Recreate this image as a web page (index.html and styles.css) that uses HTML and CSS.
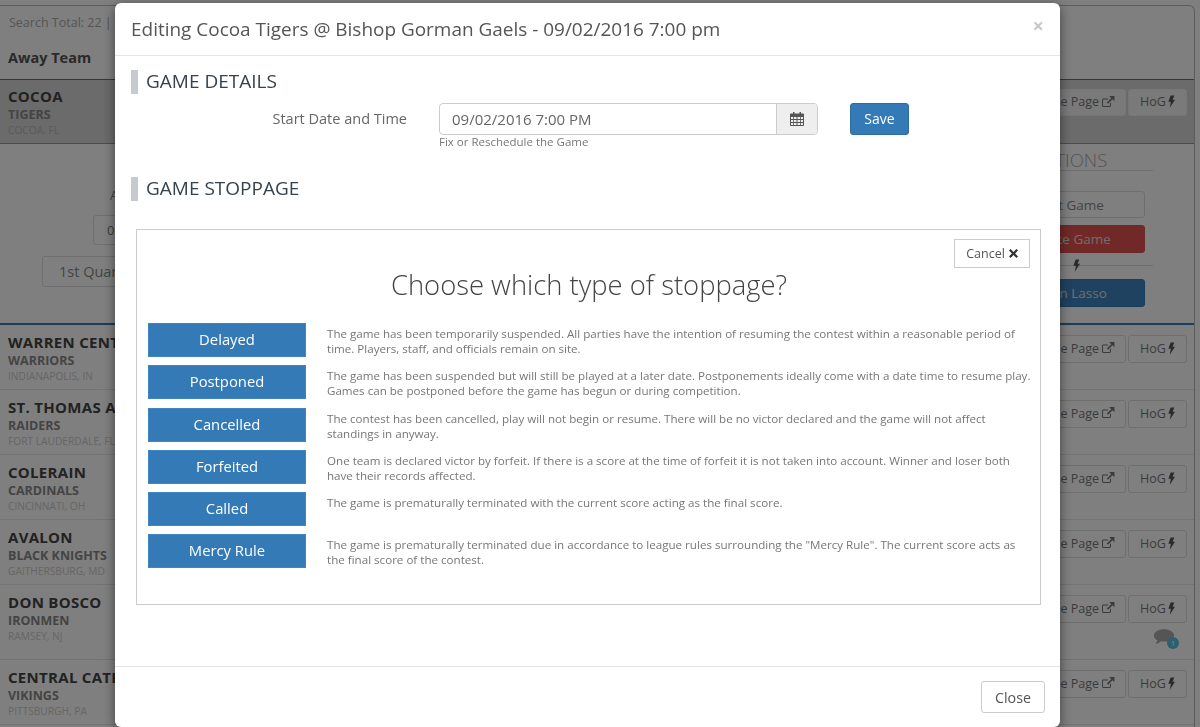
FILE: index.html
```html
<!DOCTYPE html>
<html lang="en">
<head>
<meta charset="utf-8">
<title>Edit game</title>
<link rel="stylesheet" href="styles.css">
</head>
<body>
<svg class="defs" width="0" height="0" aria-hidden="true">
  <symbol id="i-ext" viewBox="0 0 16 14"><path d="M11.5 8v3.2a1.6 1.6 0 0 1-1.6 1.6H2.6A1.6 1.6 0 0 1 1 11.2V4.6A1.6 1.6 0 0 1 2.6 3H8v1.2H2.8a.6.6 0 0 0-.6.6v6.2c0 .3.3.6.6.6h6.9c.3 0 .6-.3.6-.6V8zM9.4 0H15.5v6L13.3 3.9 8 9 6.6 7.6 11.800 2.500z"/></symbol>
  <symbol id="i-bolt" viewBox="0 0 8 14"><path d="M3 0h4.200L5.200 5H8L2 14l1.300-6.800H.4z"/></symbol>
</svg>

<main class="card">
  <div class="search">Search Total: 22 |</div>
  <div class="thead">Away Team</div>

  <section class="row row-active">
    <div class="team"><b>COCOA</b><strong>TIGERS</strong><span>COCOA, FL</span></div>
    <div class="links"><a class="btn page">Game Page <svg class="ext"><use href="#i-ext"/></svg></a><a class="btn hog">HoG <svg class="bolt"><use href="#i-bolt"/></svg></a></div>
  </section>

  <section class="detail">
    <div class="score">
      <div class="score-label">Away</div>
      <div class="score-box">0</div>
      <div class="quarter">1st Quarter</div>
    </div>
    <div class="actions">
      <h3>ACTIONS</h3>
      <a class="act act-plain">Edit Game</a>
      <a class="act act-red">Delete Game</a>
      <div class="act-sep"><svg class="bolt"><use href="#i-bolt"/></svg></div>
      <a class="act act-blue">Open Lasso</a>
    </div>
  </section>

  <section class="row">
    <div class="team"><b>WARREN CENTRAL</b><strong>WARRIORS</strong><span>INDIANAPOLIS, IN</span></div>
    <div class="links"><a class="btn page">Game Page <svg class="ext"><use href="#i-ext"/></svg></a><a class="btn hog">HoG <svg class="bolt"><use href="#i-bolt"/></svg></a></div>
  </section>
  <section class="row">
    <div class="team"><b>ST. THOMAS AQUINAS</b><strong>RAIDERS</strong><span>FORT LAUDERDALE, FL</span></div>
    <div class="links"><a class="btn page">Game Page <svg class="ext"><use href="#i-ext"/></svg></a><a class="btn hog">HoG <svg class="bolt"><use href="#i-bolt"/></svg></a></div>
  </section>
  <section class="row">
    <div class="team"><b>COLERAIN</b><strong>CARDINALS</strong><span>CINCINNATI, OH</span></div>
    <div class="links"><a class="btn page">Game Page <svg class="ext"><use href="#i-ext"/></svg></a><a class="btn hog">HoG <svg class="bolt"><use href="#i-bolt"/></svg></a></div>
  </section>
  <section class="row">
    <div class="team"><b>AVALON</b><strong>BLACK KNIGHTS</strong><span>GAITHERSBURG, MD</span></div>
    <div class="links"><a class="btn page">Game Page <svg class="ext"><use href="#i-ext"/></svg></a><a class="btn hog">HoG <svg class="bolt"><use href="#i-bolt"/></svg></a></div>
  </section>
  <section class="row row-tall">
    <div class="team"><b>DON BOSCO</b><strong>IRONMEN</strong><span>RAMSEY, NJ</span></div>
    <div class="links"><a class="btn page">Game Page <svg class="ext"><use href="#i-ext"/></svg></a><a class="btn hog">HoG <svg class="bolt"><use href="#i-bolt"/></svg></a></div>
    <div class="chat">
      <svg width="22" height="17" viewBox="0 0 24 18"><path d="M12 0c6 0 11 2.900 11 6.700s-5 6.700-11 6.700c-1 0-2 0-3-.2C7.500 14.500 5.500 15.500 2.500 16c1.200-1.200 2-2.500 2.300-4C2.500 10.800 1 8.900 1 6.700 1 2.900 6 0 12 0z"/></svg>
      <i>1</i>
    </div>
  </section>
  <section class="row">
    <div class="team"><b>CENTRAL CATHOLIC</b><strong>VIKINGS</strong><span>PITTSBURGH, PA</span></div>
    <div class="links"><a class="btn page">Game Page <svg class="ext"><use href="#i-ext"/></svg></a><a class="btn hog">HoG <svg class="bolt"><use href="#i-bolt"/></svg></a></div>
  </section>
</main>

<div class="backdrop"></div>

<div class="modal" role="dialog">
  <header class="modal-head">
    <h1>Editing Cocoa Tigers @ Bishop Gorman Gaels - 09/02/2016 7:00 pm</h1>
    <span class="x">×</span>
  </header>

  <div class="modal-body">
    <h2 class="sec">GAME DETAILS</h2>
    <div class="form-row">
      <label class="form-label">Start Date and Time</label>
      <div class="form-field">
        <div class="input-group">
          <div class="input">09/02/2016 7:00 PM</div>
          <div class="addon">
            <svg width="14" height="14" viewBox="0 0 14 14"><path fill-rule="evenodd" d="M3 0h1.500v1.500h5V0H11v1.500h2c.6 0 1 .4 1 1V13c0 .6-.4 1-1 1H1c-.6 0-1-.4-1-1V2.500c0-.6.4-1 1-1h2zM1 5v2h2.200V5zm3 0v2h2.500V5zm3.500 0v2H10V5zm3.300 0v2H13V5zM1 8v2h2.200V8zm3 0v2h2.500V8zm3.500 0v2H10V8zm3.300 0v2H13V8zM1 11v2h2.200v-2zm3 0v2h2.500v-2zm3.500 0v2H10v-2zm3.300 0v2H13v-2z"/></svg>
          </div>
        </div>
        <div class="help">Fix or Reschedule the Game</div>
      </div>
      <button class="save">Save</button>
    </div>

    <h2 class="sec sec-2">GAME STOPPAGE</h2>

    <div class="panel">
      <div class="panel-top">
        <button class="cancel">Cancel <svg width="10" height="10" viewBox="0 0 10 10"><path d="M1.800 0 5 3.200 8.200 0 10 1.800 6.800 5 10 8.200 8.200 10 5 6.800 1.800 10 0 8.200 3.200 5 0 1.800z"/></svg></button>
      </div>
      <h3 class="choose">Choose which type of stoppage?</h3>
      <div class="options">
        <button class="opt">Delayed</button>
        <p>The game has been temporarily suspended. All parties have the intention of resuming the contest within a reasonable period of time. Players, staff, and officials remain on site.</p>
        <button class="opt">Postponed</button>
        <p>The game has been suspended but will still be played at a later date. Postponements ideally come with a date time to resume play. Games can be postponed before the game has begun or during competition.</p>
        <button class="opt">Cancelled</button>
        <p>The contest has been cancelled, play will not begin or resume. There will be no victor declared and the game will not affect standings in anyway.</p>
        <button class="opt">Forfeited</button>
        <p>One team is declared victor by forfeit. If there is a score at the time of forfeit it is not taken into account. Winner and loser both have their records affected.</p>
        <button class="opt">Called</button>
        <p>The game is prematurally terminated with the current score acting as the final score.</p>
        <button class="opt">Mercy Rule</button>
        <p>The game is prematurally terminated due in accordance to league rules surrounding the "Mercy Rule". The current score acts as the final score of the contest.</p>
      </div>
    </div>
  </div>

  <footer class="modal-foot">
    <button class="close">Close</button>
  </footer>
</div>
</body>
</html>
```

FILE: styles.css
```css
* { box-sizing: border-box; }
html, body { margin: 0; height: 727px; overflow: hidden; }
body { background: #fff; font-family: "Open Sans", "Liberation Sans", sans-serif; color: #333; }
.defs { position: absolute; }

/* page behind the dialog */
.card { margin: 5px 5px 0 0; border: 1px solid #bbb; border-left: 0; border-bottom: 0; border-radius: 0 6px 0 0; height: 722px; }
.search { height: 38px; padding: 8px 0 0 9px; font-size: 12.500px; color: #aaa; }
.thead { height: 36px; padding: 4px 0 0 8px; font-size: 14.500px; font-weight: 700; color: #555; border-bottom: 1px solid #337ab7; }
.row { position: relative; display: flex; justify-content: space-between; height: 65px; padding: 7px 7px 0 8px; border-bottom: 1px solid #e6e6e6; }
.row-tall { height: 75px; }
.row-active { height: 64px; padding-top: 6px; background: #d6d6d6; border-bottom: 1px solid #999; }
.team { display: flex; flex-direction: column; white-space: nowrap; }
.team b { font-size: 15px; line-height: 20px; letter-spacing: .3px; color: #444; }
.team strong { margin-top: 1px; font-size: 12.500px; line-height: 16px; color: #888; }
.team span { font-size: 10.200px; line-height: 14px; color: #ccc; }
.row-active .team span { color: #b4b4b4; }
.links { display: flex; gap: 2px; margin-top: 3px; }
.btn { display: flex; align-items: center; justify-content: center; gap: 2px; height: 28px; padding-bottom: 2px; border: 1px solid #ddd; border-radius: 3px; font-size: 12.500px; color: #777; background: #fff; }
.row-active .btn { height: 27px; background: #f5f5f5; border-color: #eee; }
.page { width: 104px; }
.hog { width: 59px; }
.ext { width: 14px; height: 12px; fill: #777; }
.bolt { width: 7px; height: 13px; fill: #555; }
.chat { position: absolute; right: 15px; top: 44px; width: 26px; height: 24px; }
.chat svg { fill: #aaa; display: block; }
.chat i { position: absolute; right: 0; bottom: 4px; width: 12px; height: 12px; border-radius: 50%; background: #5bc0de; color: #fff; font-size: 8px; font-style: normal; line-height: 12px; text-align: center; }

.detail { display: flex; justify-content: space-between; height: 181px; border-bottom: 2px solid #337ab7; }
.score { padding: 42px 0 0 42px; width: 200px; }
.score-label { margin-left: 68px; height: 29px; font-size: 13px; color: #888; }
.score-box { margin: 0 0 0 51px; width: 60px; height: 30px; border: 1px solid #ddd; border-radius: 3px; padding: 5px 0 0 13px; font-size: 13px; color: #777; }
.quarter { margin-top: 11px; width: 120px; height: 31px; border: 1px solid #ddd; border-radius: 3px; padding: 5px 0 0 16px; font-size: 14.500px; color: #888; }
.actions { width: 166px; margin-right: 41px; padding: 6px 0 0 0; }
.actions h3 { margin: 0 0 20px; height: 21px; border-bottom: 1px solid #ddd; font-size: 18.500px; line-height: 20px; font-weight: 300; color: #aaa; text-align: center; }
.act { display: flex; align-items: center; justify-content: center; width: 150px; height: 28px; margin: 0 0 6px 8px; border: 1px solid #ddd; border-radius: 3px; font-size: 13.500px; color: #888; }
.act-plain { height: 27px; margin-bottom: 7px; padding-left: 3px; }
.act-red { background: #e2524e; border-color: #d9534f; color: #ddd; }
.act-blue { margin-bottom: 0; background: #3f85c2; border-color: #337ab7; color: #ddd; }
.act-sep { display: flex; justify-content: center; height: 20px; padding: 0 0 0 12px; background: linear-gradient(#ddd, #ddd) no-repeat 0 6px / 100% 1px; }

/* backdrop */
.backdrop { position: fixed; inset: 0; background: rgba(0, 0, 0, .5); }

/* dialog */
.modal { position: fixed; left: 115px; top: 3px; width: 945px; height: 724px; display: flex; flex-direction: column; background: #fff; border-radius: 6px; box-shadow: 0 3px 12px rgba(0, 0, 0, .5); }
.modal-head { display: flex; justify-content: space-between; height: 53px; padding: 14px 16px 0; border-bottom: 1px solid #e5e5e5; }
.modal-head h1 { margin: 0; font-size: 18.970px; line-height: 25px; font-weight: 400; color: #555; }
.x { font-size: 20px; line-height: 18px; font-weight: 700; color: #c8c8c8; }
.modal-body { flex: 1; padding: 14px 16px 0; }
.sec { margin: 0; height: 24px; padding-left: 8px; border-left: 7px solid #c6cace; font-size: 19px; line-height: 23px; font-weight: 400; color: #37424c; }
.form-row { display: flex; height: 83px; padding-top: 9px; }
.form-label { width: 276px; padding-top: 7px; text-align: right; font-size: 14.500px; line-height: 18px; color: #666; }
.form-field { width: 379px; margin-left: 32px; }
.input-group { display: flex; height: 32px; border: 1px solid #ccc; border-radius: 4px; overflow: hidden; }
.input { flex: 1; padding: 5px 12px; font-size: 15px; line-height: 20px; color: #666; }
.addon { display: flex; align-items: center; justify-content: center; width: 41px; background: #eee; border-left: 1px solid #ccc; }
.addon svg { fill: #555; }
.help { font-size: 11.500px; line-height: 14px; color: #777; }
.save { margin-left: 32px; width: 59px; height: 32px; padding: 0 0 2px; background: #337ab7; border: 1px solid #2e6da4; border-radius: 3px; color: #fff; font: 400 14px "Open Sans", sans-serif; }
.panel { margin: 28px 3px 0 5px; height: 376px; border: 1px solid #ccc; padding: 9px 10px 0 11px; }
.panel-top { display: flex; justify-content: flex-end; height: 29px; }
.cancel { display: flex; align-items: center; justify-content: center; gap: 4px; width: 76px; height: 29px; padding: 0; background: #fff; border: 1px solid #ccc; font: 400 12.500px "Open Sans", sans-serif; color: #555; }
.cancel svg { width: 9px; height: 9px; fill: #333; }
.choose { margin: 0; height: 55px; font-size: 27.400px; line-height: 34px; font-weight: 300; text-align: center; color: #444; }
.options { display: grid; grid-template-columns: 158px 1fr; grid-auto-rows: 34px; row-gap: 8.300px; column-gap: 21px; margin-right: -4px; }
.opt { height: 34px; padding: 0 0 2px; background: #337ab7; border: 1px solid #3f85c2; color: #fff; font: 400 14.800px "Open Sans", sans-serif; }
.options p { margin: 3px 0 0; font-size: 11.600px; line-height: 15px; color: #777; }
.modal-foot { display: flex; justify-content: flex-end; height: 61px; padding: 14px 15px 0 0; border-top: 1px solid #e5e5e5; }
.close { width: 64px; height: 32px; padding: 0; background: #fff; border: 1px solid #ccc; border-radius: 3px; font: 400 14.300px "Open Sans", sans-serif; color: #555; }
```
